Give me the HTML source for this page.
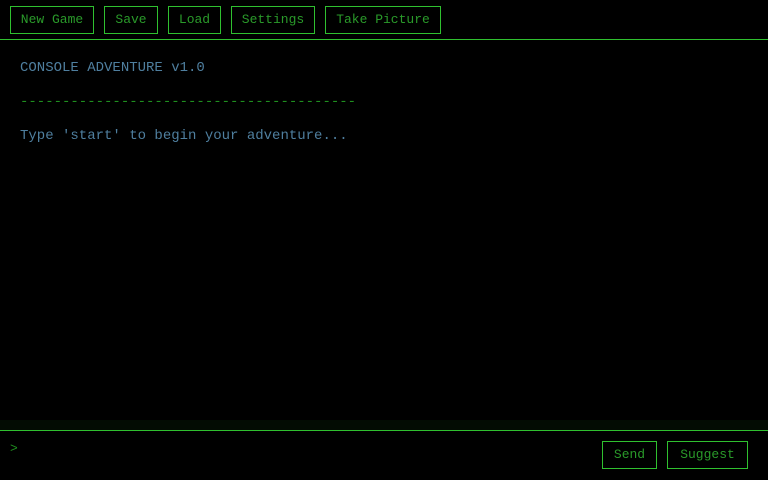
<!DOCTYPE html>
<html><head><style>
*{margin:0;padding:0;box-sizing:border-box}
body{width:768px;height:480px;background:#000;font-family:"Liberation Mono",monospace;font-size:13px;position:relative;overflow:hidden}
.btn{position:absolute;height:28px;border:1px solid #2fc02f;color:#2a9a2a;line-height:26px;text-align:center;font-size:13px}
.hl{position:absolute;left:0;width:768px;height:1px;background:#2fc02f}
.t{position:absolute;left:20px;white-space:pre;line-height:16px;font-size:14px}
</style></head><body>
<div class="btn" style="left:10px;top:6px;width:84px">New Game</div>
<div class="btn" style="left:104px;top:6px;width:54px">Save</div>
<div class="btn" style="left:168px;top:6px;width:53px">Load</div>
<div class="btn" style="left:231px;top:6px;width:84px">Settings</div>
<div class="btn" style="left:325px;top:6px;width:116px">Take Picture</div>
<div class="hl" style="top:39px"></div>
<div class="t" style="top:60px;color:#4f7f9f">CONSOLE ADVENTURE v1.0</div>
<div class="t" style="top:94px;color:#1f8f1f">----------------------------------------</div>
<div class="t" style="top:128px;color:#4f7f9f">Type 'start' to begin your adventure...</div>
<div style="position:absolute;left:0;top:420px;width:768px;height:10px;background:#030c03"></div>
<div class="hl" style="top:430px"></div>
<div class="t" style="left:10px;top:441px;color:#1f8f1f;font-size:13px">&gt;</div>
<div class="btn" style="left:602px;top:441px;width:55px">Send</div>
<div class="btn" style="left:667px;top:441px;width:81px">Suggest</div>
</body></html>
